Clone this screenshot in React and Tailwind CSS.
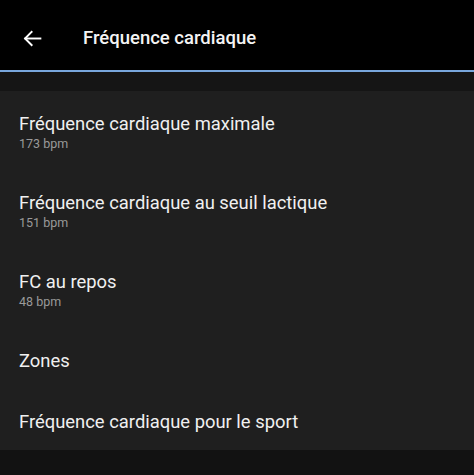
import React from "react";

const items = [
  { title: "Fréquence cardiaque maximale", sub: "173 bpm" },
  { title: "Fréquence cardiaque au seuil lactique", sub: "151 bpm" },
  { title: "FC au repos", sub: "48 bpm" },
  { title: "Zones" },
  { title: "Fréquence cardiaque pour le sport" },
];

export default function App() {
  return (
    <div className="h-[475px] w-full bg-[#121212] flex flex-col font-['Roboto',sans-serif] overflow-hidden">
      {/* Header */}
      <div className="h-[70px] bg-black flex items-center shrink-0 pt-[6px]">
        <button className="w-[83px] h-full flex items-center pl-[22px] text-white">
          <svg viewBox="0 0 24 24" className="w-[21px] h-[21px]" fill="none" stroke="currentColor" strokeWidth="2.2" strokeLinecap="square">
            <path d="M21 12H4" />
            <path d="M11 4.5L3.5 12l7.5 7.5" />
          </svg>
        </button>
        <h1 className="text-[18.5px] font-medium text-[#f4f4f4] leading-6">Fréquence cardiaque</h1>
      </div>
      <div className="h-[2px] bg-[#78a6dc] shrink-0" />
      <div className="h-[19px] bg-[#151515] shrink-0" />

      {/* List */}
      <div className="bg-[#1f1f1f] flex flex-col shrink-0">
        {items.map((it) => (
          <div key={it.title} className="pl-[19px] pr-4 pt-[21px] pb-4">
            <div className="text-[18.4px] leading-6 text-[#f0f0f0]">{it.title}</div>
            {it.sub && <div className="text-[12.5px] leading-[16px] text-[#9a9a9a] pb-[2px]">{it.sub}</div>}
          </div>
        ))}
      </div>
    </div>
  );
}
